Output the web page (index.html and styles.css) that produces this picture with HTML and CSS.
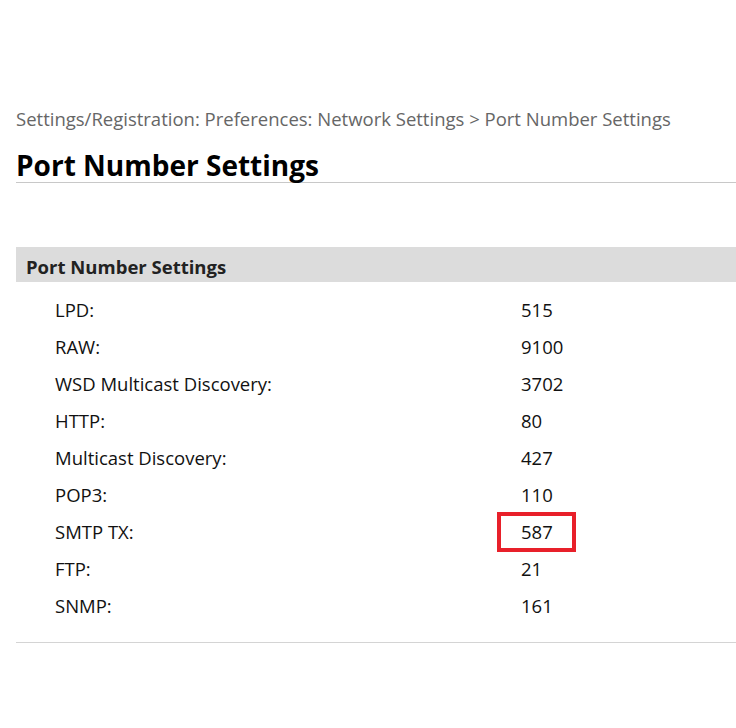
FILE: index.html
```html
<!DOCTYPE html>
<html lang="en">
<head>
    <meta charset="UTF-8">
    <title>Port Number Settings</title>
    <link rel="stylesheet" href="styles.css">
</head>
<body>
    <div class="page">
        <div class="breadcrumb">Settings/Registration: Preferences: Network Settings &gt; Port Number Settings</div>
        <h1 class="title">Port Number Settings</h1>

        <div class="section">
            <div class="section-head">Port Number Settings</div>
            <table class="ports">
                <tbody>
                    <tr><td class="label">LPD:</td><td class="value">515</td></tr>
                    <tr><td class="label">RAW:</td><td class="value">9100</td></tr>
                    <tr><td class="label">WSD Multicast Discovery:</td><td class="value">3702</td></tr>
                    <tr><td class="label">HTTP:</td><td class="value">80</td></tr>
                    <tr><td class="label">Multicast Discovery:</td><td class="value">427</td></tr>
                    <tr><td class="label">POP3:</td><td class="value">110</td></tr>
                    <tr><td class="label">SMTP TX:</td><td class="value"><span class="mark">587</span></td></tr>
                    <tr><td class="label">FTP:</td><td class="value">21</td></tr>
                    <tr><td class="label">SNMP:</td><td class="value">161</td></tr>
                </tbody>
            </table>
        </div>
    </div>
</body>
</html>
```

FILE: styles.css
```css
body {
    margin: 0;
    padding: 0;
    background-color: #ffffff;
    font-family: "Open Sans", "Noto Sans", sans-serif;
    color: #111;
}
.page {
    padding: 106px 0 0 16px;
}
.breadcrumb {
    font-size: 18.5px;
    color: #666;
    line-height: 26px;
}
.title {
    font-size: 28px;
    font-weight: bold;
    color: #000;
    margin: 16px 0 0;
    line-height: 34px;
    border-bottom: 1px solid #c8c8c8;
}
.section {
    margin-top: 64px;
    border-bottom: 1px solid #d4d4d4;
    padding-bottom: 18px;
}
.section-head {
    background-color: #dcdcdc;
    font-size: 18.5px;
    font-weight: bold;
    color: #222;
    height: 35px;
    line-height: 40px;
    padding-left: 10px;
}
.ports {
    border-collapse: collapse;
    margin-top: 9px;
}
.ports td {
    font-size: 18.5px;
    height: 37px;
    line-height: 24px;
    padding: 0;
    vertical-align: middle;
}
.ports .label {
    width: 466px;
    padding-left: 39px;
}
.mark {
    display: inline-block;
    margin: -2px 0 -2px -24px;
    padding: 0 19px 0 20px;
    line-height: 32px;
    border: 4px solid #e8202a;
}
```
